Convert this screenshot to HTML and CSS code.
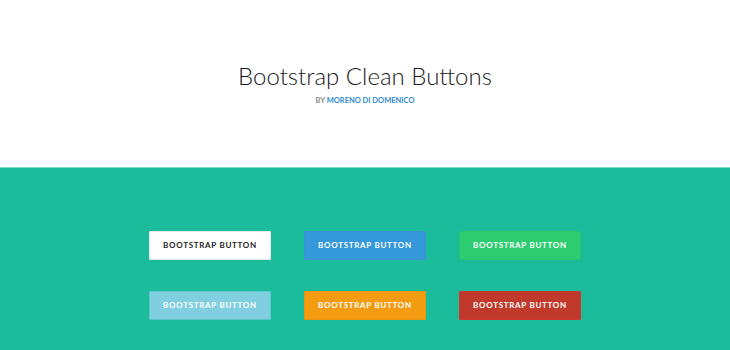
FILE: index.html
```html
<!DOCTYPE html>
<html lang="en">
<head>
    <meta charset="UTF-8">
    <meta name="viewport" content="width=device-width, initial-scale=1.0">
    <title>Bootstrap Clean Buttons</title>
    <link rel="stylesheet" href="styles.css">
</head>
<body>
    <header class="intro">
        <h1>Bootstrap Clean Buttons</h1>
        <p class="byline">BY <a href="#">MORENO DI DOMENICO</a></p>
    </header>

    <!-- Button showcase -->
    <section class="showcase">
        <div class="button-grid">
            <a href="#" class="btn btn-default">Bootstrap Button</a>
            <a href="#" class="btn btn-primary">Bootstrap Button</a>
            <a href="#" class="btn btn-success">Bootstrap Button</a>
            <a href="#" class="btn btn-info">Bootstrap Button</a>
            <a href="#" class="btn btn-warning">Bootstrap Button</a>
            <a href="#" class="btn btn-danger">Bootstrap Button</a>
        </div>
    </section>
</body>
</html>
```
FILE: styles.css
```css
body {
    margin: 0;
    font-family: Lato, "Open Sans", sans-serif;
    background-color: #fff;
    color: #222;
}
.intro {
    height: 167px;
    box-sizing: border-box;
    padding-top: 61px;
    text-align: center;
}
.intro h1 {
    margin: 0;
    font-size: 24px;
    font-weight: 300;
    line-height: 30px;
    letter-spacing: 0;
    color: #1a1a1a;
}
.byline {
    margin: 5px 0 0;
    font-size: 7.5px;
    font-weight: 700;
    color: #8a8a8a;
    letter-spacing: 0;
}
.byline a {
    color: #2f8ccc;
    text-decoration: none;
}
/* Green area */
.showcase {
    height: 183px;
    background-color: #1abc9c;
    border-top: 1px solid #7fd9c6;
    box-sizing: border-box;
    padding-top: 63px;
}
.button-grid {
    display: grid;
    grid-template-columns: repeat(3, 122px);
    column-gap: 33px;
    row-gap: 31px;
    justify-content: center;
}
.btn {
    display: block;
    height: 29px;
    line-height: 27px;
    box-sizing: border-box;
    border: 1px solid transparent;
    border-radius: 1px;
    font-size: 8px;
    font-weight: 700;
    letter-spacing: 0.7px;
    text-transform: uppercase;
    text-align: center;
    text-decoration: none;
    color: #fff;
}
.btn-default {
    background-color: #fff;
    border-color: #e6e6e6;
    color: #222;
}
.btn-primary {
    background-color: #3498db;
    border-color: #3a93d0;
}
.btn-success {
    background-color: #2ecc71;
    border-color: #2ac46a;
}
.btn-info {
    background-color: #80cfe0;
    border-color: #5fc9c9;
}
.btn-warning {
    background-color: #f39c12;
    border-color: #ec950e;
}
.btn-danger {
    background-color: #c0392b;
    border-color: #cf3a2e;
}
```
